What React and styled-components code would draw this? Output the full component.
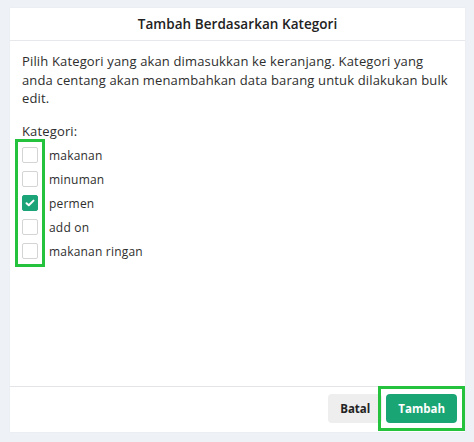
import React, { useState } from "react";
import styled, { createGlobalStyle } from "styled-components";

const Global = createGlobalStyle`
  html, body { margin: 0; padding: 0; background: #eef2f6; }
  * { box-sizing: border-box; }
  body { font-family: "Open Sans", "Noto Sans", sans-serif; color: #2b2b2b; }
`;

const Page = styled.div`
  width: 474px;
  height: 442px;
  padding: 8px 9px 10px 10px;
  background: #eef2f6;
`;

const Panel = styled.div`
  height: 100%;
  background: #ffffff;
  display: flex;
  flex-direction: column;
  box-shadow: 0 0 1px rgba(0, 0, 0, 0.08);
`;

const Header = styled.div`
  height: 33px;
  flex: none;
  display: flex;
  align-items: center;
  justify-content: center;
  border-bottom: 1px solid #e6e8eb;
`;

const Title = styled.h2`
  margin: 0;
  font-size: 13.5px;
  font-weight: 600;
  color: #222;
  letter-spacing: 0.05px;
`;

const Body = styled.div`
  flex: 1;
  padding: 11px 12px 0 12px;
`;

const Intro = styled.p`
  margin: 0;
  font-size: 13px;
  line-height: 18.5px;
  color: #2e2e2e;
  letter-spacing: 0.15px;
`;

const FieldLabel = styled.div`
  margin-top: 14px;
  font-size: 13px;
  line-height: 18.5px;
  color: #2e2e2e;
  letter-spacing: 0.15px;
`;

const List = styled.div`
  margin-top: 6px;
  display: flex;
  gap: 11px;
`;

const CheckCol = styled.div`
  display: flex;
  flex-direction: column;
  gap: 8px;
  padding: 1px 0;
  outline: 3px solid #25c23d;
  outline-offset: 4px;
`;

const LabelCol = styled.div`
  display: flex;
  flex-direction: column;
  gap: 8px;
  padding: 1px 0;
`;

const Box = styled.button`
  width: 16px;
  height: 16px;
  padding: 0;
  border-radius: 2px;
  border: 1px solid ${(p) => (p.$checked ? "#1ba478" : "#d4d4d4")};
  background: ${(p) => (p.$checked ? "#1ba478" : "#fff")};
  display: flex;
  align-items: center;
  justify-content: center;
  cursor: pointer;
`;

const ItemLabel = styled.span`
  height: 16px;
  display: flex;
  align-items: center;
  font-size: 12px;
  color: #2e2e2e;
  letter-spacing: 0.2px;
`;

const Footer = styled.div`
  flex: none;
  height: 46px;
  border-top: 1px solid #e2e4e7;
  display: flex;
  justify-content: flex-end;
  align-items: flex-start;
  gap: 4px;
  padding: 7px 8px 0 0;
`;

const Highlight = styled.span`
  display: flex;
  outline: 3px solid #25c23d;
  outline-offset: 5px;
`;

const Button = styled.button`
  height: 29px;
  border: none;
  border-radius: 4px;
  font-family: "Open Sans", sans-serif;
  font-size: 11.5px;
  font-weight: 700;
  padding: 0 12px;
  min-width: ${(p) => (p.$primary ? "69px" : "54px")};
  background: ${(p) => (p.$primary ? "#1aa574" : "#eeeeee")};
  color: ${(p) => (p.$primary ? "#ffffff" : "#222")};
  cursor: pointer;
`;

const Check = () => (
  <svg width="10" height="8" viewBox="0 0 10 8">
    <path d="M1.5 4.2 L3.8 6.3 L8.5 1.6" fill="none" stroke="#fff" strokeWidth="2" strokeLinecap="round" strokeLinejoin="round" />
  </svg>
);

const items = ["makanan", "minuman", "permen", "add on", "makanan ringan"];

export default function App() {
  const [checked, setChecked] = useState({ permen: true });
  return (
    <>
      <Global />
      <Page>
        <Panel>
          <Header>
            <Title>Tambah Berdasarkan Kategori</Title>
          </Header>
          <Body>
            <Intro>
              Pilih Kategori yang akan dimasukkan ke keranjang. Kategori yang anda centang akan menambahkan data barang untuk dilakukan bulk edit.
            </Intro>
            <FieldLabel>Kategori:</FieldLabel>
            <List>
              <CheckCol>
                {items.map((it) => (
                  <Box
                    key={it}
                    $checked={!!checked[it]}
                    onClick={() => setChecked((c) => ({ ...c, [it]: !c[it] }))}
                  >
                    {checked[it] && <Check />}
                  </Box>
                ))}
              </CheckCol>
              <LabelCol>
                {items.map((it) => (
                  <ItemLabel key={it}>{it}</ItemLabel>
                ))}
              </LabelCol>
            </List>
          </Body>
          <Footer>
            <Button>Batal</Button>
            <Highlight>
              <Button $primary>Tambah</Button>
            </Highlight>
          </Footer>
        </Panel>
      </Page>
    </>
  );
}
